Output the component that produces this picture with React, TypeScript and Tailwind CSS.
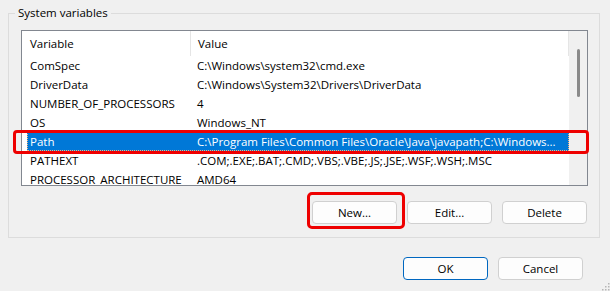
const rows = [
  { name: "ComSpec", value: "C:\\Windows\\system32\\cmd.exe" },
  { name: "DriverData", value: "C:\\Windows\\System32\\Drivers\\DriverData" },
  { name: "NUMBER_OF_PROCESSORS", value: "4" },
  { name: "OS", value: "Windows_NT" },
  { name: "Path", value: "C:\\Program Files\\Common Files\\Oracle\\Java\\javapath;C:\\Windows...", selected: true },
  { name: "PATHEXT", value: ".COM;.EXE;.BAT;.CMD;.VBS;.VBE;.JS;.JSE;.WSF;.WSH;.MSC" },
  { name: "PROCESSOR_ARCHITECTURE", value: "AMD64" },
]

function Btn({ label, primary = false }: { label: string; primary?: boolean }) {
  return (
    <button
      className={
        "w-[85px] h-[23px] rounded-[4px] border bg-[#fdfdfd] text-[11.5px] leading-none text-black " +
        (primary ? "border-[#0067c0]" : "border-[#d0d0d0]")
      }
    >
      {label}
    </button>
  )
}

export default function App() {
  return (
    <div className="relative w-[610px] h-[291px] overflow-hidden bg-[#f0f0f0] font-['Open_Sans',sans-serif] text-[11.5px] text-black">
      {/* System variables group */}
      <div className="relative ml-[8px] mt-[13px] w-[592px] h-[225px] border border-[#dcdcdc] pl-[12px] pt-[16px]">
        <span className="absolute left-[6px] -top-[9px] bg-[#f0f0f0] px-[3px] leading-[16px]">System variables</span>

        <div className="flex w-[567px] h-[156px] overflow-hidden border border-[#828790] bg-white">
          <div className="flex-1 flex flex-col pl-[5px]">
            <div className="flex h-[25px] shrink-0 items-center">
              <div className="w-[164px] h-full flex items-center pl-[3px] border-r border-[#e5e5e5]">Variable</div>
              <div className="flex-1 h-full flex items-center pl-[7px] border-r border-[#e5e5e5]">Value</div>
            </div>
            {rows.map((r) => (
              <div
                key={r.name}
                className={
                  "flex h-[19px] shrink-0 items-center whitespace-nowrap " +
                  (r.selected ? "bg-[#0078d7] text-white outline outline-1 outline-dotted outline-[#f7b27a] -outline-offset-1" : "")
                }
              >
                <div className="w-[164px] pl-[3px]">{r.name}</div>
                <div className="flex-1 pl-[6px] overflow-hidden">{r.value}</div>
              </div>
            ))}
          </div>
          <div className="w-[18px] shrink-0 bg-[#f0f0f0] pt-[18px] flex justify-center">
            <div className="w-[3px] h-[48px] rounded-full bg-[#8a8a8a]" />
          </div>
        </div>

        <div className="flex w-[566px] justify-end gap-[10px] mt-[15px]">
          <Btn label="New..." />
          <Btn label="Edit..." />
          <Btn label="Delete" />
        </div>
      </div>

      <div className="flex justify-end gap-[10px] mt-[19px] pr-[27px]">
        <Btn label="OK" primary />
        <Btn label="Cancel" />
      </div>

      {/* resize grip */}
      <svg className="absolute right-0 bottom-0" width="10" height="10" viewBox="0 0 10 10">
        {[[8, 2], [8, 5], [5, 5], [8, 8], [5, 8], [2, 8]].map(([x, y], i) => (
          <rect key={i} x={x} y={y} width="1.5" height="1.5" fill="#b5b5b5" />
        ))}
      </svg>

      {/* red highlight boxes */}
      <div className="absolute left-[13px] top-[130px] w-[576px] h-[24px] rounded-[4px] border-[3px] border-[#ee0000]" />
      <div className="absolute left-[307px] top-[192px] w-[98px] h-[37px] rounded-[5px] border-[3px] border-[#ee0000]" />
    </div>
  )
}
